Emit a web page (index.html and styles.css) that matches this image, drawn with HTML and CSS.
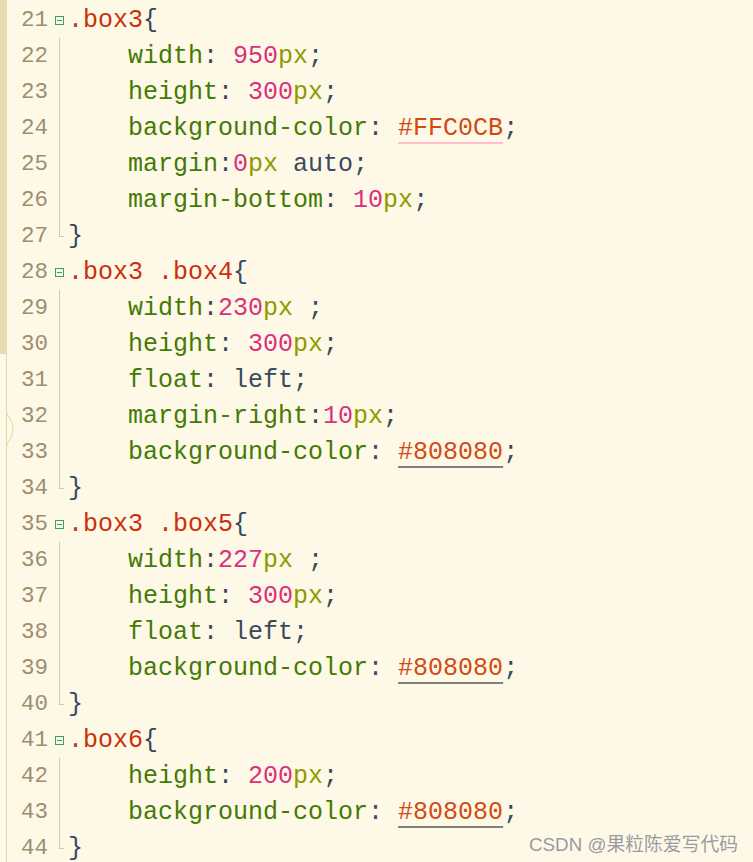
FILE: index.html
```html
<!DOCTYPE html>
<html lang="zh">
<head>
<meta charset="utf-8">
<title>CSS code</title>
<link rel="stylesheet" href="styles.css">
</head>
<body>
<div class="page">
  <div class="rail">
    <div class="thumb"></div>
    <div class="track"></div>
    <svg class="bump" width="10" height="34" viewBox="0 0 10 34"><path d="M0.5 0.5 C1 4 7 8 7 17 C7 26 1 30 0.5 33.5" fill="none" stroke="#E2D2A6" stroke-width="1"/></svg>
  </div>
  <div class="editor">
    <div class="line"><span class="ln">21</span><span class="fold"><svg class="fold-box" width="9" height="9" viewBox="0 0 9 9"><rect x="0.5" y="0.5" width="8" height="8" fill="none" stroke="#3AA35A"/><path d="M2 4.5 H7" stroke="#3AA35A"/></svg></span><span class="code"><span class="sel">.box3</span><span class="pun">{</span></span></div>
    <div class="line"><span class="ln">22</span><span class="fold"><span class="guide"></span></span><span class="code">    <span class="prop">width</span><span class="pun">:</span> <span class="num">950</span><span class="unit">px</span><span class="pun">;</span></span></div>
    <div class="line"><span class="ln">23</span><span class="fold"><span class="guide"></span></span><span class="code">    <span class="prop">height</span><span class="pun">:</span> <span class="num">300</span><span class="unit">px</span><span class="pun">;</span></span></div>
    <div class="line"><span class="ln">24</span><span class="fold"><span class="guide"></span></span><span class="code">    <span class="prop">background-color</span><span class="pun">:</span> <span class="hex u-pink">#FFC0CB</span><span class="pun">;</span></span></div>
    <div class="line"><span class="ln">25</span><span class="fold"><span class="guide"></span></span><span class="code">    <span class="prop">margin</span><span class="pun">:</span><span class="num">0</span><span class="unit">px</span> <span class="val">auto</span><span class="pun">;</span></span></div>
    <div class="line"><span class="ln">26</span><span class="fold"><span class="guide"></span></span><span class="code">    <span class="prop">margin-bottom</span><span class="pun">:</span> <span class="num">10</span><span class="unit">px</span><span class="pun">;</span></span></div>
    <div class="line"><span class="ln">27</span><span class="fold"><span class="hook"></span></span><span class="code"><span class="pun">}</span></span></div>
    <div class="line"><span class="ln">28</span><span class="fold"><svg class="fold-box" width="9" height="9" viewBox="0 0 9 9"><rect x="0.5" y="0.5" width="8" height="8" fill="none" stroke="#3AA35A"/><path d="M2 4.5 H7" stroke="#3AA35A"/></svg></span><span class="code"><span class="sel">.box3 .box4</span><span class="pun">{</span></span></div>
    <div class="line"><span class="ln">29</span><span class="fold"><span class="guide"></span></span><span class="code">    <span class="prop">width</span><span class="pun">:</span><span class="num">230</span><span class="unit">px</span> <span class="pun">;</span></span></div>
    <div class="line"><span class="ln">30</span><span class="fold"><span class="guide"></span></span><span class="code">    <span class="prop">height</span><span class="pun">:</span> <span class="num">300</span><span class="unit">px</span><span class="pun">;</span></span></div>
    <div class="line"><span class="ln">31</span><span class="fold"><span class="guide"></span></span><span class="code">    <span class="prop">float</span><span class="pun">:</span> <span class="val">left</span><span class="pun">;</span></span></div>
    <div class="line"><span class="ln">32</span><span class="fold"><span class="guide"></span></span><span class="code">    <span class="prop">margin-right</span><span class="pun">:</span><span class="num">10</span><span class="unit">px</span><span class="pun">;</span></span></div>
    <div class="line"><span class="ln">33</span><span class="fold"><span class="guide"></span></span><span class="code">    <span class="prop">background-color</span><span class="pun">:</span> <span class="hex u-gray">#808080</span><span class="pun">;</span></span></div>
    <div class="line"><span class="ln">34</span><span class="fold"><span class="hook"></span></span><span class="code"><span class="pun">}</span></span></div>
    <div class="line"><span class="ln">35</span><span class="fold"><svg class="fold-box" width="9" height="9" viewBox="0 0 9 9"><rect x="0.5" y="0.5" width="8" height="8" fill="none" stroke="#3AA35A"/><path d="M2 4.5 H7" stroke="#3AA35A"/></svg></span><span class="code"><span class="sel">.box3 .box5</span><span class="pun">{</span></span></div>
    <div class="line"><span class="ln">36</span><span class="fold"><span class="guide"></span></span><span class="code">    <span class="prop">width</span><span class="pun">:</span><span class="num">227</span><span class="unit">px</span> <span class="pun">;</span></span></div>
    <div class="line"><span class="ln">37</span><span class="fold"><span class="guide"></span></span><span class="code">    <span class="prop">height</span><span class="pun">:</span> <span class="num">300</span><span class="unit">px</span><span class="pun">;</span></span></div>
    <div class="line"><span class="ln">38</span><span class="fold"><span class="guide"></span></span><span class="code">    <span class="prop">float</span><span class="pun">:</span> <span class="val">left</span><span class="pun">;</span></span></div>
    <div class="line"><span class="ln">39</span><span class="fold"><span class="guide"></span></span><span class="code">    <span class="prop">background-color</span><span class="pun">:</span> <span class="hex u-gray">#808080</span><span class="pun">;</span></span></div>
    <div class="line"><span class="ln">40</span><span class="fold"><span class="hook"></span></span><span class="code"><span class="pun">}</span></span></div>
    <div class="line"><span class="ln">41</span><span class="fold"><svg class="fold-box" width="9" height="9" viewBox="0 0 9 9"><rect x="0.5" y="0.5" width="8" height="8" fill="none" stroke="#3AA35A"/><path d="M2 4.5 H7" stroke="#3AA35A"/></svg></span><span class="code"><span class="sel">.box6</span><span class="pun">{</span></span></div>
    <div class="line"><span class="ln">42</span><span class="fold"><span class="guide"></span></span><span class="code">    <span class="prop">height</span><span class="pun">:</span> <span class="num">200</span><span class="unit">px</span><span class="pun">;</span></span></div>
    <div class="line"><span class="ln">43</span><span class="fold"><span class="guide"></span></span><span class="code">    <span class="prop">background-color</span><span class="pun">:</span> <span class="hex u-gray">#808080</span><span class="pun">;</span></span></div>
    <div class="line"><span class="ln">44</span><span class="fold"><span class="hook"></span></span><span class="code"><span class="pun">}</span></span></div>
  </div>
  <div class="watermark">CSDN @果粒陈爱写代码</div>
</div>
</body>
</html>
```
FILE: styles.css
```css
html, body {
  margin: 0;
  padding: 0;
  height: 862px;
  overflow: hidden;
  background: #FEF8E7;
}
.page {
  position: relative;
  display: flex;
  height: 862px;
}
.rail {
  position: relative;
  width: 7px;
  display: flex;
  flex-direction: column;
  flex: none;
}
.thumb {
  height: 354px;
  background: #E9DAB2;
}
.track {
  flex: 1;
  width: 6px;
  border-right: 1px solid #E4D4AA;
}
.bump {
  position: absolute;
  left: 6px;
  top: 412px;
}
.editor {
  flex: 1;
  padding-top: 2px;
}
.line {
  display: flex;
  align-items: center;
  height: 36px;
}
.ln {
  width: 41px;
  flex: none;
  text-align: right;
  font-family: "Liberation Mono", "DejaVu Sans Mono", monospace;
  font-size: 22.5px;
  color: #9E8E70;
}
.fold {
  width: 20px;
  flex: none;
  height: 36px;
  display: flex;
  align-items: center;
}
.fold-box {
  margin-left: 7px;
  display: block;
}
.guide {
  margin-left: 11px;
  width: 0;
  height: 36px;
  border-left: 1px solid #CEC8BA;
}
.hook {
  margin-left: 11px;
  width: 4px;
  height: 18px;
  align-self: flex-start;
  border-left: 1px solid #CEC8BA;
  border-bottom: 1px solid #CEC8BA;
}
.code {
  white-space: pre;
  font-family: "Liberation Mono", "DejaVu Sans Mono", monospace;
  font-size: 25px;
  color: #34495E;
}
.sel { color: #CB300D; }
.pun { color: #34495E; }
.prop { color: #437A05; }
.num { color: #D8317F; }
.unit { color: #8E9B00; }
.val { color: #3A4A5C; }
.hex { color: #D14A12; }
.u-pink, .u-gray {
  text-decoration-line: underline;
  text-decoration-thickness: 2px;
  text-underline-offset: 7px;
}
.u-pink { text-decoration-color: #FFC0CB; }
.u-gray { text-decoration-color: #808080; }
.watermark {
  position: absolute;
  right: 15px;
  bottom: 6px;
  font-family: "Liberation Sans", "Noto Sans CJK SC", sans-serif;
  font-size: 18.8px;
  color: #9A9A9A;
  text-shadow: 0 0 1px #ffffff;
}
```
